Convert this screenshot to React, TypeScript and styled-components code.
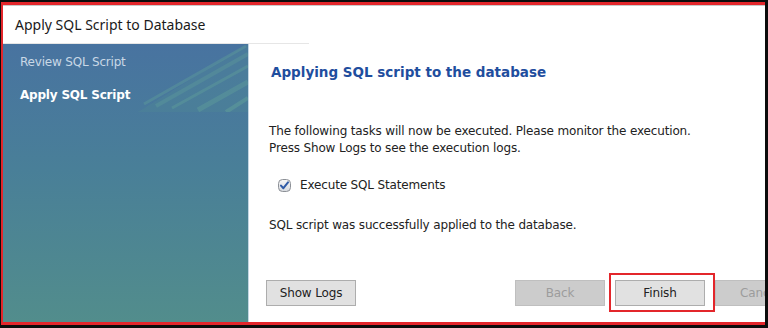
import styled, { createGlobalStyle } from "styled-components";

const GlobalStyle = createGlobalStyle`
  html, body {
    margin: 0;
    padding: 0;
    background: #0c0c0c;
  }
`;

const Frame = styled.div`
  width: 768px;
  height: 328px;
  box-sizing: border-box;
  padding: 2px 3px 3px 1px;
  background: #0c0c0c;
  overflow: hidden;
`;

const Window = styled.div`
  height: 100%;
  box-sizing: border-box;
  border-top: 3px solid #e3262b;
  border-left: 2px solid #e3262b;
  border-bottom: 3px solid #e3262b;
  background: #ffffff;
  display: flex;
  flex-direction: column;
`;

const TitleBar = styled.div`
  height: 39px;
  box-sizing: border-box;
  border-top: 1px solid #c9c9c9;
  display: flex;
  flex-direction: column;
  justify-content: space-between;
`;

const Title = styled.div`
  padding: 9px 0 0 12px;
  font-family: "Noto Sans", "Open Sans", sans-serif;
  font-size: 14px;
  color: #1a1a1a;
`;

const Rule = styled.div`
  width: 306px;
  height: 1px;
  background: #e6e6e6;
`;

const Body = styled.div`
  flex: 1;
  display: flex;
  min-height: 0;
`;

const Sidebar = styled.div`
  position: relative;
  width: 246px;
  flex-shrink: 0;
  box-sizing: border-box;
  border-right: 1px solid #c4d6e3;
  background: linear-gradient(180deg, #4873a0 0%, #497f98 45%, #528d8c 100%);
  padding: 10px 0 0 17px;
  display: flex;
  flex-direction: column;
  gap: 17px;
  overflow: hidden;
`;

const Stripes = styled.svg`
  position: absolute;
  top: 0;
  right: 0;
  width: 110px;
  height: 68px;
`;

const Step = styled.div<{ $active?: boolean }>`
  position: relative;
  font-family: "DejaVu Sans", Verdana, sans-serif;
  font-size: 12px;
  letter-spacing: -0.2px;
  color: ${(p) => (p.$active ? "#ffffff" : "#c9d8e6")};
  font-weight: ${(p) => (p.$active ? 700 : 400)};
  line-height: 16px;
`;

const Content = styled.div`
  flex: 1;
  min-width: 0;
  padding: 19px 0 0 20px;
  display: flex;
  flex-direction: column;
  overflow: hidden;
  font-family: "DejaVu Sans", Verdana, sans-serif;
  font-size: 12px;
  color: #222;
`;

const Heading = styled.h1`
  margin: 0 0 0 2px;
  font-family: "DejaVu Sans", Verdana, sans-serif;
  font-size: 13.5px;
  font-weight: 700;
  color: #1f4e9e;
  line-height: 18px;
`;

const Paragraph = styled.p`
  margin: 42px 0 0 0;
  line-height: 17px;
  letter-spacing: -0.15px;
`;

const CheckRow = styled.label`
  margin: 20px 0 0 9px;
  display: flex;
  align-items: center;
  gap: 9px;
  line-height: 17px;
  letter-spacing: -0.15px;
`;

const Status = styled.p`
  margin: 23px 0 0 0;
  line-height: 17px;
  letter-spacing: -0.15px;
`;

const ButtonRow = styled.div`
  margin-top: auto;
  margin-bottom: 16px;
  margin-left: -3px;
  display: flex;
  align-items: center;
  gap: 10px;
`;

const Spacer = styled.div`
  width: 139px;
  flex-shrink: 0;
`;

const Button = styled.button<{ $disabled?: boolean }>`
  width: 90px;
  height: 26px;
  flex-shrink: 0;
  box-sizing: border-box;
  border: 1px solid ${(p) => (p.$disabled ? "#bfbfbf" : "#adadad")};
  background: ${(p) => (p.$disabled ? "#cccccc" : "#e1e1e1")};
  color: ${(p) => (p.$disabled ? "#9c9c9c" : "#222")};
  font-family: "DejaVu Sans", Verdana, sans-serif;
  font-size: 12px;
  letter-spacing: -0.15px;
  padding: 0;
`;

const Highlight = styled.div`
  border: 2px solid #e3262b;
  padding: 5px 8px 4px 4px;
  margin: -7px -10px -6px -6px;
  display: flex;
`;

function CheckIcon() {
  return (
    <svg width="13" height="13" viewBox="0 0 13 13">
      <defs>
        <linearGradient id="cb" x1="0" y1="0" x2="0" y2="1">
          <stop offset="0" stopColor="#f6f6f6" />
          <stop offset="1" stopColor="#d6d9de" />
        </linearGradient>
      </defs>
      <rect x="0.5" y="0.5" width="12" height="12" rx="4" fill="url(#cb)" stroke="#8d9197" />
      <path d="M3 6.6 L5.4 9.2 L10 3.4" fill="none" stroke="#2f5aa6" strokeWidth="2" strokeLinecap="round" strokeLinejoin="round" />
    </svg>
  );
}

export default function App() {
  return (
    <>
      <GlobalStyle />
      <Frame>
        <Window>
          <TitleBar>
            <Title>Apply SQL Script to Database</Title>
            <Rule />
          </TitleBar>
          <Body>
            <Sidebar>
              <Stripes viewBox="0 0 110 68" preserveAspectRatio="none">
                <path d="M0 68 L110 0 L110 68 Z" fill="#4f8a94" opacity="0.35" />
                <path d="M6 60 L108 2" stroke="#5e9c9a" strokeWidth="3" opacity="0.45" />
                <path d="M18 62 L110 10" stroke="#5e9c9a" strokeWidth="4" opacity="0.4" />
                <path d="M34 64 L110 22" stroke="#62a29a" strokeWidth="3" opacity="0.4" />
                <path d="M60 66 L110 38" stroke="#62a29a" strokeWidth="5" opacity="0.4" />
                <path d="M88 68 L110 54" stroke="#64a49a" strokeWidth="4" opacity="0.45" />
              </Stripes>
              <Step>Review SQL Script</Step>
              <Step $active>Apply SQL Script</Step>
            </Sidebar>
            <Content>
              <Heading>Applying SQL script to the database</Heading>
              <Paragraph>
                The following tasks will now be executed. Please monitor the execution.
                <br />
                Press Show Logs to see the execution logs.
              </Paragraph>
              <CheckRow>
                <CheckIcon />
                Execute SQL Statements
              </CheckRow>
              <Status>SQL script was successfully applied to the database.</Status>
              <ButtonRow>
                <Button>Show Logs</Button>
                <Spacer />
                <Button $disabled>Back</Button>
                <Highlight>
                  <Button>Finish</Button>
                </Highlight>
                <Button $disabled>Cancel</Button>
              </ButtonRow>
            </Content>
          </Body>
        </Window>
      </Frame>
    </>
  );
}
